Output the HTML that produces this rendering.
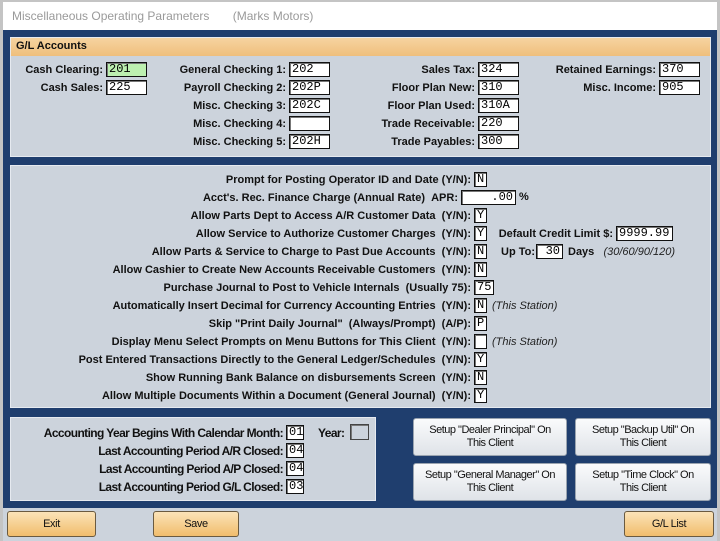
<!DOCTYPE html>
<html><head><meta charset="utf-8"><style>
*{margin:0;padding:0;box-sizing:border-box}
body{width:720px;height:541px;position:relative;overflow:hidden;background:#c4c4c4;font-family:"Liberation Sans",Arial,sans-serif}
.a{position:absolute}
.title{left:3px;top:2px;width:714px;height:28px;background:#fff;color:#9a9a9a;font-size:12px;line-height:28px;padding-left:9px}
.navy{left:3px;top:30px;width:714px;height:478px;background:#1f3e6e}
.panel{background:#ccd3dc;border:1px solid #e6eaf0}
.hdr{left:11px;top:38px;width:699px;height:18px;background:linear-gradient(#f6d3a0,#efbf7c);font-weight:bold;font-size:11px;line-height:17px;padding-left:5px;color:#111}
.l{position:absolute;font-weight:bold;font-size:11px;color:#111;text-align:right;white-space:nowrap;line-height:14px}
.n{font-size:12px;letter-spacing:-0.6px}
.b{position:absolute;background:#fff;border:1px solid #111;box-shadow:inset 1px 1px 0 #777;font-family:"Liberation Mono",monospace;font-size:12px;line-height:13px;padding-left:2px;color:#000;height:15px}
.i{font-style:italic;font-weight:normal;color:#222}
.btn{position:absolute;background:linear-gradient(#fafbfc,#dfe3e8);border:1px solid #9aa4b0;border-radius:3px;font-size:11px;letter-spacing:-0.5px;text-align:center;line-height:13px;color:#111;display:flex;align-items:center;justify-content:center}
.ob{position:absolute;background:linear-gradient(#fbe3b8,#f1bd6c);border:1px solid #6a5a40;border-radius:3px;font-size:11px;letter-spacing:-0.4px;text-align:center;color:#111;line-height:24px}
</style></head><body>
<div class="a title">Miscellaneous Operating Parameters &nbsp;&nbsp;&nbsp;&nbsp;&nbsp; (Marks Motors)</div>
<div class="a navy"></div>
<div class="a panel" style="left:10px;top:37px;width:701px;height:120px"></div>
<div class="a hdr">G/L Accounts</div>

<div class="l" style="right:617px;top:63px">Cash Clearing:</div><div class="b" style="left:106px;top:62px;width:41px;background:#bdf0b0">201</div>
<div class="l" style="right:617px;top:81px">Cash Sales:</div><div class="b" style="left:106px;top:80px;width:41px">225</div>

<div class="l" style="right:434px;top:63px">General Checking 1:</div><div class="b" style="left:289px;top:62px;width:41px">202</div>
<div class="l" style="right:434px;top:81px">Payroll Checking 2:</div><div class="b" style="left:289px;top:80px;width:41px">202P</div>
<div class="l" style="right:434px;top:99px">Misc. Checking 3:</div><div class="b" style="left:289px;top:98px;width:41px">202C</div>
<div class="l" style="right:434px;top:117px">Misc. Checking 4:</div><div class="b" style="left:289px;top:116px;width:41px"></div>
<div class="l" style="right:434px;top:135px">Misc. Checking 5:</div><div class="b" style="left:289px;top:134px;width:41px">202H</div>

<div class="l" style="right:245px;top:63px">Sales Tax:</div><div class="b" style="left:478px;top:62px;width:41px">324</div>
<div class="l" style="right:245px;top:81px">Floor Plan New:</div><div class="b" style="left:478px;top:80px;width:41px">310</div>
<div class="l" style="right:245px;top:99px">Floor Plan Used:</div><div class="b" style="left:478px;top:98px;width:41px">310A</div>
<div class="l" style="right:245px;top:117px">Trade Receivable:</div><div class="b" style="left:478px;top:116px;width:41px">220</div>
<div class="l" style="right:245px;top:135px">Trade Payables:</div><div class="b" style="left:478px;top:134px;width:41px">300</div>

<div class="l" style="right:64px;top:63px">Retained Earnings:</div><div class="b" style="left:659px;top:62px;width:41px">370</div>
<div class="l" style="right:64px;top:81px">Misc. Income:</div><div class="b" style="left:659px;top:80px;width:41px">905</div>

<div class="a panel" style="left:10px;top:165px;width:701px;height:243px"></div>
<div class="l" style="right:249px;top:173px">Prompt for Posting Operator ID and Date (Y/N):</div><div class="b" style="left:474px;top:172px;width:13px">N</div>
<div class="l" style="right:262px;top:191px">Acct's. Rec. Finance Charge (Annual Rate) &nbsp;APR:</div><div class="b" style="left:461px;top:190px;width:55px;text-align:right;padding-right:2px">.00</div><div class="l" style="left:519px;top:190px">%</div>
<div class="l" style="right:249px;top:209px">Allow Parts Dept to Access A/R Customer Data &nbsp;(Y/N):</div><div class="b" style="left:474px;top:208px;width:13px">Y</div>
<div class="l" style="right:249px;top:227px">Allow Service to Authorize Customer Charges &nbsp;(Y/N):</div><div class="b" style="left:474px;top:226px;width:13px">Y</div>
<div class="l" style="right:107px;top:227px">Default Credit Limit $:</div><div class="b" style="left:616px;top:226px;width:57px">9999.99</div>
<div class="l" style="right:249px;top:245px">Allow Parts &amp; Service to Charge to Past Due Accounts &nbsp;(Y/N):</div><div class="b" style="left:474px;top:244px;width:13px">N</div>
<div class="l" style="left:501px;top:245px">Up To:</div><div class="b" style="left:536px;top:244px;width:27px;text-align:right;padding-right:2px">30</div><div class="l" style="left:568px;top:245px">Days &nbsp;&nbsp;<span class="i">(30/60/90/120)</span></div>
<div class="l" style="right:249px;top:263px">Allow Cashier to Create New Accounts Receivable Customers &nbsp;(Y/N):</div><div class="b" style="left:474px;top:262px;width:13px">N</div>
<div class="l" style="right:249px;top:281px">Purchase Journal to Post to Vehicle Internals &nbsp;(Usually 75):</div><div class="b" style="left:474px;top:280px;width:20px">75</div>
<div class="l" style="right:249px;top:299px">Automatically Insert Decimal for Currency Accounting Entries &nbsp;(Y/N):</div><div class="b" style="left:474px;top:298px;width:13px">N</div><div class="l i" style="left:492px;top:299px">(This Station)</div>
<div class="l" style="right:249px;top:317px">Skip "Print Daily Journal" &nbsp;(Always/Prompt) &nbsp;(A/P):</div><div class="b" style="left:474px;top:316px;width:13px">P</div>
<div class="l" style="right:249px;top:335px">Display Menu Select Prompts on Menu Buttons for This Client &nbsp;(Y/N):</div><div class="b" style="left:474px;top:334px;width:13px"></div><div class="l i" style="left:492px;top:335px">(This Station)</div>
<div class="l" style="right:249px;top:353px">Post Entered Transactions Directly to the General Ledger/Schedules &nbsp;(Y/N):</div><div class="b" style="left:474px;top:352px;width:13px">Y</div>
<div class="l" style="right:249px;top:371px">Show Running Bank Balance on disbursements Screen &nbsp;(Y/N):</div><div class="b" style="left:474px;top:370px;width:13px">N</div>
<div class="l" style="right:249px;top:389px">Allow Multiple Documents Within a Document (General Journal) &nbsp;(Y/N):</div><div class="b" style="left:474px;top:388px;width:13px">Y</div>

<div class="a panel" style="left:10px;top:417px;width:366px;height:84px"></div>
<div class="l n" style="right:437px;top:426px">Accounting Year Begins With Calendar Month:</div><div class="b" style="left:286px;top:425px;width:18px">01</div>
<div class="l n" style="left:318px;top:426px">Year:</div><div class="b" style="left:350px;top:424px;width:19px;height:16px;background:#ccd3dc;border-color:#444"></div>
<div class="l n" style="right:437px;top:444px">Last Accounting Period A/R Closed:</div><div class="b" style="left:286px;top:443px;width:18px">04</div>
<div class="l n" style="right:437px;top:462px">Last Accounting Period A/P Closed:</div><div class="b" style="left:286px;top:461px;width:18px">04</div>
<div class="l n" style="right:437px;top:480px">Last Accounting Period G/L Closed:</div><div class="b" style="left:286px;top:479px;width:18px">03</div>

<div class="btn" style="left:413px;top:418px;width:154px;height:38px">Setup "Dealer Principal" On<br>This Client</div>
<div class="btn" style="left:575px;top:418px;width:136px;height:38px">Setup "Backup Util" On<br>This Client</div>
<div class="btn" style="left:413px;top:463px;width:154px;height:38px">Setup "General Manager" On<br>This Client</div>
<div class="btn" style="left:575px;top:463px;width:136px;height:38px">Setup "Time Clock" On<br>This Client</div>

<div class="a" style="left:3px;top:508px;width:714px;height:33px;background:#ccd3dc"></div>
<div class="ob" style="left:7px;top:511px;width:89px;height:26px">Exit</div>
<div class="ob" style="left:153px;top:511px;width:86px;height:26px">Save</div>
<div class="ob" style="left:624px;top:511px;width:90px;height:26px">G/L List</div>
</body></html>
